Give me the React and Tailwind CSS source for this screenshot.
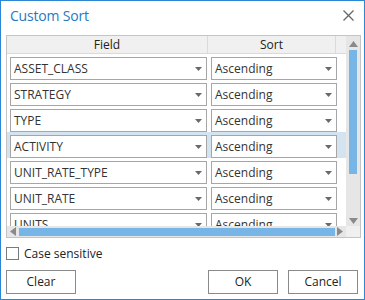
import React from 'react';

const rows = ['ASSET_CLASS', 'STRATEGY', 'TYPE', 'ACTIVITY', 'UNIT_RATE_TYPE', 'UNIT_RATE', 'UNITS'];

const Caret = () => (
  <svg width="7" height="4" viewBox="0 0 7 4" className="shrink-0">
    <path d="M0 0h7L3.5 4z" fill="#6a6a6a" />
  </svg>
);

const Combo = ({ value, width }) => (
  <div className={`${width} h-[23px] border border-[#a6a6a6] bg-white flex items-center justify-between pl-[3px] pr-[4px] shrink-0`}>
    <span className="text-[#333]">{value}</span>
    <Caret />
  </div>
);

const App = () => {
  return (
    <div
      className="w-[365px] h-[300px] border border-[#2b86d4] bg-white flex flex-col text-[12px] text-[#222] overflow-hidden"
      style={{ fontFamily: '"Open Sans", "Noto Sans", sans-serif' }}
    >
      {/* Title bar */}
      <div className="h-[33px] flex items-center justify-between pl-[9px] pr-[10px] pb-[4px] shrink-0">
        <span className="text-[14px] tracking-[-0.2px] text-[#1f7ac2] leading-none">Custom Sort</span>
        <svg width="11" height="11" viewBox="0 0 11 11">
          <path d="M0.5 0.5l10 10M10.5 0.5l-10 10" stroke="#666" strokeWidth="1.3" />
        </svg>
      </div>

      {/* Grid */}
      <div className="ml-[5px] mr-[3px] h-[203px] border border-[#c4c4c4] flex flex-col shrink-0 mt-[1px]">
        <div className="flex flex-1 min-h-0">
          <div className="flex-1 min-w-0 flex flex-col overflow-hidden">
            {/* Header */}
            <div className="h-[18px] flex bg-[#f0f0f0] border-b border-[#dadada] shrink-0">
              <div className="w-[201px] border-r border-[#dadada] flex items-center justify-center">Field</div>
              <div className="w-[128px] border-r border-[#dadada] flex items-center justify-center">Sort</div>
              <div className="flex-1" />
            </div>
            {/* Rows */}
            <div className="flex flex-col">
              {rows.map((r) => (
                <div
                  key={r}
                  className={`h-[26px] flex items-end pl-[3px] gap-[4px] shrink-0 ${r === 'ACTIVITY' ? 'bg-[#d3e3f0]' : ''}`}
                >
                  <Combo value={r} width="w-[197px]" />
                  <Combo value="Ascending" width="w-[126px]" />
                </div>
              ))}
            </div>
          </div>
          {/* Vertical scrollbar */}
          <div className="w-[14px] bg-[#e6e6e6] flex flex-col items-center shrink-0">
            <svg width="9" height="6" viewBox="0 0 9 6" className="mt-[5px]">
              <path d="M0 6h9L4.5 0z" fill="#8a8a8a" />
            </svg>
            <div className="w-[8px] h-[124px] bg-[#76b5e6] mt-[3px]" />
            <div className="flex-1" />
            <svg width="9" height="6" viewBox="0 0 9 6" className="mb-[2px]">
              <path d="M0 0h9L4.5 6z" fill="#8a8a8a" />
            </svg>
          </div>
        </div>
        {/* Horizontal scrollbar */}
        <div className="h-[11px] flex shrink-0">
          <div className="flex-1 bg-[#e6e6e6] flex items-center">
            <svg width="6" height="9" viewBox="0 0 6 9" className="ml-[3px]">
              <path d="M6 0v9L0 4.5z" fill="#8a8a8a" />
            </svg>
            <div className="h-[8px] w-[316px] bg-[#76b5e6] ml-[3px]" />
            <div className="flex-1" />
            <svg width="6" height="9" viewBox="0 0 6 9" className="mr-[3px]">
              <path d="M0 0v9L6 4.5z" fill="#8a8a8a" />
            </svg>
          </div>
          <div className="w-[14px] bg-[#f0f0f0]" />
        </div>
      </div>

      {/* Case sensitive */}
      <label className="h-[13px] flex items-center ml-[5px] mt-[9px] gap-[5px] shrink-0">
        <span className="w-[13px] h-[13px] border border-[#7a7a7a] bg-white" />
        <span className="leading-none">Case sensitive</span>
      </label>

      {/* Buttons */}
      <div className="flex items-center ml-[5px] mr-[6px] mt-[10px] shrink-0">
        <button className="w-[70px] h-[24px] border border-[#8a8a8a] bg-white">Clear</button>
        <div className="flex-1" />
        <button className="w-[70px] h-[24px] border border-[#8a8a8a] bg-white">OK</button>
        <button className="w-[70px] h-[24px] border border-[#8a8a8a] bg-white ml-[10px]">Cancel</button>
      </div>
    </div>
  );
};

export default App;
